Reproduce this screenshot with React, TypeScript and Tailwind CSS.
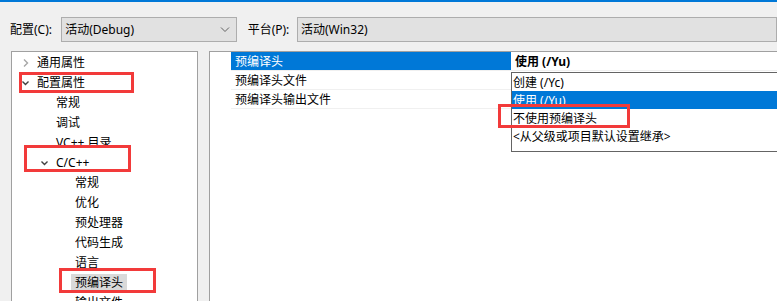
import React from 'react';

type TreeItem = {
  label: string;
  level: 0 | 1 | 2;
  chevron?: 'right' | 'down';
  selected?: boolean;
};

const tree: TreeItem[] = [
  { label: '通用属性', level: 0, chevron: 'right' },
  { label: '配置属性', level: 0, chevron: 'down' },
  { label: '常规', level: 1 },
  { label: '调试', level: 1 },
  { label: 'VC++ 目录', level: 1 },
  { label: 'C/C++', level: 1, chevron: 'down' },
  { label: '常规', level: 2 },
  { label: '优化', level: 2 },
  { label: '预处理器', level: 2 },
  { label: '代码生成', level: 2 },
  { label: '语言', level: 2 },
  { label: '预编译头', level: 2, selected: true },
  { label: '输出文件', level: 2 },
];

const indent = ['pl-[9px]', 'pl-[28px]', 'pl-[47px]'];

const props = ['预编译头', '预编译头文件', '预编译头输出文件'];

const options = ['创建 (/Yc)', '使用 (/Yu)', '不使用预编译头', '<从父级或项目默认设置继承>'];

function Chevron({ dir }: { dir: 'right' | 'down' }) {
  if (dir === 'right') {
    return (
      <svg width="8" height="10" viewBox="0 0 8 10" className="ml-[1px]">
        <polyline points="2,1.5 5.5,5 2,8.5" fill="none" stroke="#a6a6a6" strokeWidth="1.4" />
      </svg>
    );
  }
  return (
    <svg width="9" height="8" viewBox="0 0 9 8">
      <polyline points="1.5,2.5 4.5,5.5 7.5,2.5" fill="none" stroke="#404040" strokeWidth="1.4" />
    </svg>
  );
}

function Combo({ text, className, arrow }: { text: string; className: string; arrow?: boolean }) {
  return (
    <div
      className={`h-[25px] flex items-center justify-between pl-[3px] pr-[6px] pt-[1px] bg-[#e1e1e1] border border-[#adadad] ${className}`}
    >
      <span>{text}</span>
      {arrow && (
        <svg width="10" height="6" viewBox="0 0 10 6">
          <polyline points="1,0.5 5,4.5 9,0.5" fill="none" stroke="#606060" strokeWidth="1" />
        </svg>
      )}
    </div>
  );
}

export default function App() {
  return (
    <div
      className="relative w-[777px] h-[301px] overflow-hidden bg-[#f0f0f0] text-[12px] text-black"
      style={{ fontFamily: '"Noto Sans", "Noto Sans CJK SC", sans-serif' }}
    >
      <div className="h-[2px] bg-[#0078d7]" />

      {/* configuration / platform bar */}
      <div className="flex items-center pt-[15px] pl-[10px]">
        <span className="w-[56px] pt-[1px]">配置(C):</span>
        <Combo text="活动(Debug)" className="w-[191px]" arrow />
        <span className="ml-[11px] w-[54px] pt-[1px]">平台(P):</span>
        <Combo text="活动(Win32)" className="w-[480px] shrink-0" />
      </div>

      <div className="flex mt-[9px] h-[270px]">
        {/* tree */}
        <div className="ml-[11px] w-[187px] shrink-0 bg-white border border-[#a0a0a0]">
          {tree.map((item, i) => (
            <div key={i} className={`flex items-center h-[20px] pt-[2px] ${indent[item.level]}`}>
              <span className="w-[16px] flex items-center">
                {item.chevron && <Chevron dir={item.chevron} />}
              </span>
              {item.selected ? (
                <span className="-ml-[4px] px-[4px] h-[18px] leading-[18px] bg-[#d9d9d9]">{item.label}</span>
              ) : (
                <span>{item.label}</span>
              )}
            </div>
          ))}
        </div>

        {/* property grid */}
        <div className="ml-[11px] w-[600px] shrink-0 bg-white border border-[#a0a0a0] pl-[21px]">
          {props.map((p, i) => (
            <div key={p} className="flex h-[19px] border-b border-[#f0f0f0]">
              <div
                className={`w-[280px] shrink-0 pl-[4px] leading-[20px] ${
                  i === 0 ? 'bg-[#0078d7] text-white' : ''
                }`}
              >
                {p}
              </div>
              <div className="flex-1 pl-[4px] leading-[20px] font-bold">{i === 0 ? '使用 (/Yu)' : ''}</div>
            </div>
          ))}
        </div>
      </div>

      {/* open dropdown list */}
      <div className="absolute left-[511px] top-[72px] w-[290px] h-[80px] bg-white border border-[#646464]">
        {options.map((o, i) => (
          <div
            key={o}
            className={`h-[18px] leading-[20px] pl-[1px] ${i === 1 ? 'bg-[#0078d7] text-white' : ''}`}
          >
            {o}
          </div>
        ))}
      </div>

      {/* red annotation boxes */}
      <div className="absolute left-[19px] top-[72px] w-[115px] h-[21px] border-[3px] border-[#f23a3a]" />
      <div className="absolute left-[24px] top-[145px] w-[107px] h-[27px] border-[3px] border-[#f23a3a]" />
      <div className="absolute left-[59px] top-[268px] w-[97px] h-[25px] border-[3px] border-[#f23a3a]" />
      <div className="absolute left-[498px] top-[104px] w-[132px] h-[24px] border-[3px] border-[#f23a3a]" />
    </div>
  );
}
